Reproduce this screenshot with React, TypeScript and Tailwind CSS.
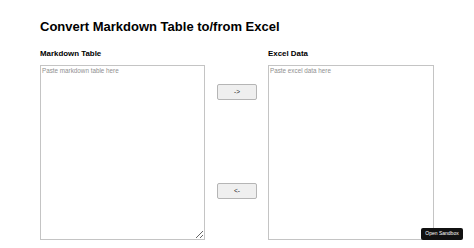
export default function App() {
  return (
    <div className="relative min-h-[248px] bg-white pl-[40px] pt-[19px] font-['Liberation_Sans',Arial,sans-serif] text-black">
      <h1 className="text-[13px] font-bold leading-[15px]">Convert Markdown Table to/from Excel</h1>

      <div className="mt-[15px] flex items-start">
        {/* Markdown side */}
        <div className="flex w-[165px] flex-col">
          <label className="text-[7.9px] font-bold leading-[9px]">Markdown Table</label>
          <textarea
            placeholder="Paste markdown table here"
            className="mt-[7px] h-[175px] w-[165px] resize border border-[#c4c4c4] bg-white px-[1px] py-[1px] text-[6.3px] leading-[8px] placeholder:text-[#8f8f8f] outline-none"
          />
        </div>

        {/* Convert buttons */}
        <div className="flex w-[63px] flex-col items-center pt-[35px]">
          <button className="ml-[1px] h-[16px] w-[40px] rounded-[2px] border border-[#b5b5b5] bg-[#efefef] text-[6.5px] leading-none text-[#222]">
            -&gt;
          </button>
          <button className="ml-[1px] mt-[83px] h-[16px] w-[40px] rounded-[2px] border border-[#b5b5b5] bg-[#efefef] text-[6.5px] leading-none text-[#222]">
            &lt;-
          </button>
        </div>

        {/* Excel side */}
        <div className="flex w-[166px] flex-col">
          <label className="text-[7.9px] font-bold leading-[9px]">Excel Data</label>
          <textarea
            placeholder="Paste excel data here"
            className="mt-[7px] h-[175px] w-[166px] resize border border-[#c4c4c4] bg-white px-[1px] py-[1px] text-[6.3px] leading-[8px] placeholder:text-[#8f8f8f] outline-none"
          />
        </div>
      </div>

      <div className="absolute bottom-[8px] right-[11px] flex h-[12px] w-[42px] items-center justify-center rounded-[2px] bg-[#111] text-[5px] text-white">
        Open Sandbox
      </div>
    </div>
  );
}
